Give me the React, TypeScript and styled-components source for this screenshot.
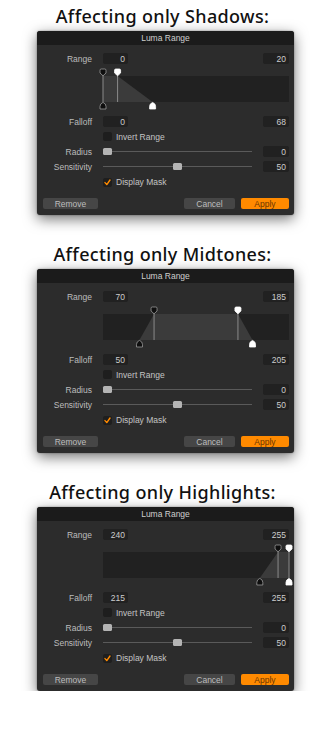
import React from "react";
import styled, { createGlobalStyle } from "styled-components";

const GlobalStyle = createGlobalStyle`
	html, body {
		margin: 0;
		padding: 0;
		background: #ffffff;
	}
	body {
		font-family: "Liberation Sans", Arial, sans-serif;
	}
`;

const GRAPH_W = 186;

type LumaSetup = {
	title: string;
	range: [number, number];
	falloff: [number, number];
};

const setups: LumaSetup[] = [
	{ title: "Affecting only Shadows:", range: [0, 20], falloff: [0, 68] },
	{ title: "Affecting only Midtones:", range: [70, 185], falloff: [50, 205] },
	{ title: "Affecting only Highlights:", range: [240, 255], falloff: [215, 255] },
];

const Page = styled.div`
	width: 331px;
	display: flex;
	flex-direction: column;
	align-items: center;
	padding-top: 4px;
	gap: 27px;
`;

const Section = styled.section`
	display: flex;
	flex-direction: column;
	align-items: center;
`;

const Heading = styled.h2`
	margin: 0;
	height: 24px;
	line-height: 24px;
	font-family: "Noto Sans", "DejaVu Sans", sans-serif;
	font-weight: 500;
	font-size: 18px;
	color: #111111;
	letter-spacing: 0.35px;
	transform: translateX(-3px);
`;

const Dialog = styled.div`
	margin-top: 3px;
	width: 257px;
	height: 184px;
	background: #2c2c2c;
	border-radius: 3px;
	overflow: hidden;
	box-shadow: 0 4px 14px rgba(0, 0, 0, 0.55), 0 0 2px rgba(0, 0, 0, 0.4);
	display: flex;
	flex-direction: column;
	font-size: 8.5px;
	color: #c4c4c4;
`;

const TitleBar = styled.div`
	height: 14px;
	background: #1b1b1b;
	display: flex;
	align-items: center;
	justify-content: center;
	color: #cfcfcf;
`;

const Body = styled.div`
	display: grid;
	grid-template-columns: 55px ${GRAPH_W}px;
	column-gap: 11px;
	padding: 6px 5px 0 0;
`;

const Label = styled.div<{ $h?: number; $top?: number }>`
	height: ${(p) => p.$h ?? 15}px;
	margin-top: ${(p) => p.$top ?? 0}px;
	display: flex;
	align-items: center;
	justify-content: flex-end;
	color: #bcbcbc;
`;

const Cell = styled.div<{ $h?: number; $top?: number }>`
	height: ${(p) => p.$h ?? 15}px;
	margin-top: ${(p) => p.$top ?? 0}px;
	display: flex;
	align-items: center;
	justify-content: space-between;
`;

const GraphSlot = styled.div`
	height: 40px;
	margin-top: 3px;
`;

const NumBox = styled.div<{ $w?: number }>`
	width: ${(p) => p.$w ?? 26}px;
	height: 11px;
	box-sizing: border-box;
	background: #212121;
	border-radius: 2px;
	padding-right: 3px;
	display: flex;
	align-items: center;
	justify-content: flex-end;
	color: #cdcdcd;
`;

const Check = styled.div`
	display: flex;
	align-items: center;
	gap: 4px;
	color: #c4c4c4;
`;

const Box = styled.div`
	width: 9px;
	height: 9px;
	background: #1e1e1e;
	border-radius: 2px;
	display: flex;
	align-items: center;
	justify-content: center;
`;

const Track = styled.div`
	position: relative;
	width: 149px;
	height: 1px;
	background: #5a5a5a;
`;

const Thumb = styled.div`
	position: absolute;
	top: -3px;
	width: 9px;
	height: 7px;
	border-radius: 1.5px;
	background: #b4b4b4;
`;

const Footer = styled.div`
	display: flex;
	align-items: center;
	gap: 6px;
	padding: 0 5px 0 6px;
	margin-top: 8px;
`;

const Button = styled.div<{ $w: number; $primary?: boolean }>`
	width: ${(p) => p.$w}px;
	height: 11px;
	border-radius: 2px;
	display: flex;
	align-items: center;
	justify-content: center;
	background: ${(p) => (p.$primary ? "#ff8a00" : "#464646")};
	color: ${(p) => (p.$primary ? "#6a3500" : "#bdbdbd")};
`;

const Grow = styled.div`
	flex: 1;
`;

const x = (v: number) => (v / 255) * GRAPH_W;

const topMarker = (cx: number, light: boolean) => (
	<path
		d={`M${cx - 3},1.2 Q${cx - 3},0 ${cx - 1.8},0 L${cx + 1.8},0 Q${cx + 3},0 ${cx + 3},1.2 L${cx + 3},4 L${cx},6.8 L${cx - 3},4 Z`}
		fill={light ? "#ffffff" : "#0e0e0e"}
		stroke={light ? "#ffffff" : "#9a9a9a"}
		strokeWidth={0.8}
	/>
);

const bottomMarker = (cx: number, light: boolean) => (
	<path
		d={`M${cx - 3},40 L${cx - 3},37.4 Q${cx - 3},34.6 ${cx},33.4 Q${cx + 3},34.6 ${cx + 3},37.4 L${cx + 3},40 Z`}
		fill={light ? "#ffffff" : "#0e0e0e"}
		stroke={light ? "#ffffff" : "#9a9a9a"}
		strokeWidth={0.8}
	/>
);

const RangeGraph = ({ range, falloff }: Pick<LumaSetup, "range" | "falloff">) => {
	const r0 = x(range[0]);
	const r1 = x(range[1]);
	const f0 = x(falloff[0]);
	const f1 = x(falloff[1]);
	return (
		<svg width={GRAPH_W} height={40} style={{ overflow: "visible", display: "block" }}>
			<rect x={0} y={7} width={GRAPH_W} height={26} fill="#212121" />
			<polygon points={`${f0},33 ${r0},7 ${r1},7 ${f1},33`} fill="#3b3b3b" />
			<line x1={r0} y1={4} x2={r0} y2={33} stroke="#8a8a8a" strokeWidth={1} />
			<line x1={r1} y1={4} x2={r1} y2={33} stroke="#8a8a8a" strokeWidth={1} />
			{topMarker(r0, false)}
			{topMarker(r1, true)}
			{bottomMarker(f0, false)}
			{bottomMarker(f1, true)}
		</svg>
	);
};

const Slider = ({ value }: { value: number }) => (
	<Track>
		<Thumb style={{ left: `${(value / 100) * 140}px` }} />
	</Track>
);

const LumaDialog = ({ range, falloff }: LumaSetup) => (
	<Dialog>
		<TitleBar>Luma Range</TitleBar>
		<Body>
			<Label>Range</Label>
			<Cell>
				<NumBox $w={25}>{range[0]}</NumBox>
				<NumBox>{range[1]}</NumBox>
			</Cell>

			<GraphSlot />
			<GraphSlot>
				<RangeGraph range={range} falloff={falloff} />
			</GraphSlot>

			<Label $top={5}>Falloff</Label>
			<Cell $top={5}>
				<NumBox $w={25}>{falloff[0]}</NumBox>
				<NumBox>{falloff[1]}</NumBox>
			</Cell>

			<Label />
			<Cell>
				<Check>
					<Box />
					Invert Range
				</Check>
			</Cell>

			<Label>Radius</Label>
			<Cell>
				<Slider value={0} />
				<NumBox>0</NumBox>
			</Cell>

			<Label>Sensitivity</Label>
			<Cell>
				<Slider value={50} />
				<NumBox>50</NumBox>
			</Cell>

			<Label $h={16} />
			<Cell $h={16}>
				<Check>
					<Box>
						<svg width={7} height={7} viewBox="0 0 7 7">
							<polyline
								points="1,3.6 2.8,5.6 6,1"
								fill="none"
								stroke="#ff8a00"
								strokeWidth={1.4}
								strokeLinecap="round"
								strokeLinejoin="round"
							/>
						</svg>
					</Box>
					Display Mask
				</Check>
			</Cell>
		</Body>
		<Footer>
			<Button $w={55}>Remove</Button>
			<Grow />
			<Button $w={51}>Cancel</Button>
			<Button $w={48} $primary>
				Apply
			</Button>
		</Footer>
	</Dialog>
);

export default function App() {
	return (
		<>
			<GlobalStyle />
			<Page>
				{setups.map((s) => (
					<Section key={s.title}>
						<Heading>{s.title}</Heading>
						<LumaDialog {...s} />
					</Section>
				))}
			</Page>
		</>
	);
}
